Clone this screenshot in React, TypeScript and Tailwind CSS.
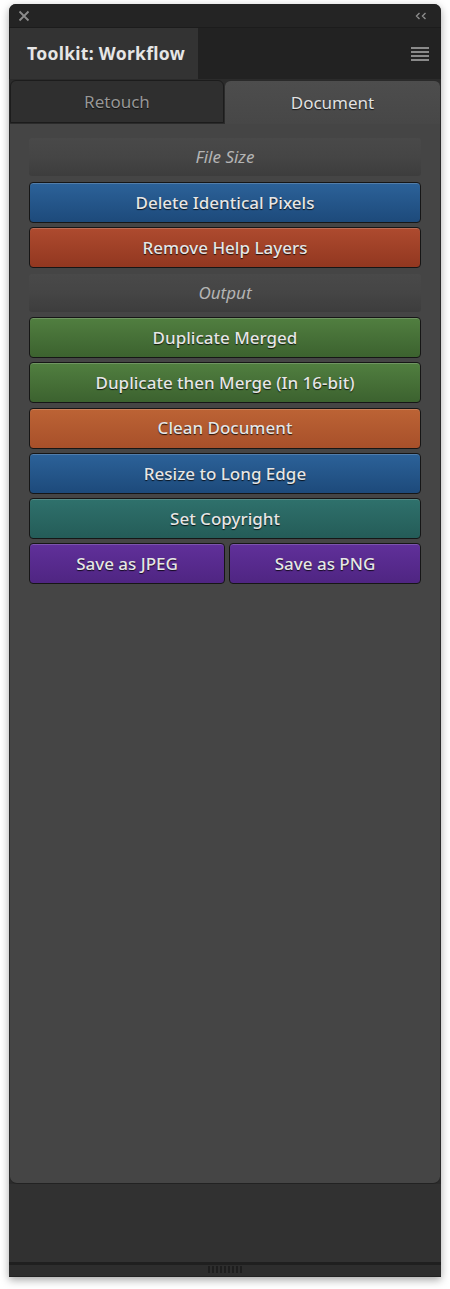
import React from 'react';

const font = { fontFamily: '"Noto Sans", "Open Sans", sans-serif' };

function SectionHead({ label }: { label: string }) {
  return (
    <div className="h-[38px] rounded-[3px] bg-gradient-to-b from-[#494949] via-[#454545] to-[#3d3d3d] flex items-center justify-center">
      <span className="italic text-[17px] text-[#b4b4b4]">{label}</span>
    </div>
  );
}

function Btn({ label, top, bottom, className = '' }: { label: string; top: string; bottom: string; className?: string }) {
  return (
    <button
      className={`h-[41px] rounded-[4px] border border-[#161616] flex items-center justify-center text-[17px] font-medium text-[#e6e6e6] [text-shadow:0_1px_1px_rgba(0,0,0,0.8)] shadow-[inset_0_1px_0_rgba(255,255,255,0.18)] ${top} ${bottom} bg-gradient-to-b ${className}`}
    >
      {label}
    </button>
  );
}

export default function App() {
  return (
    <div className="bg-white min-h-[1289px] pt-[4px] pl-[9px]" style={font}>
      <div className="w-[432px] h-[1273px] rounded-t-[7px] bg-[#2b2b2b] flex flex-col overflow-hidden shadow-[0_3px_8px_rgba(0,0,0,0.35)]">
        {/* title bar */}
        <div className="h-[23px] bg-[#242424] flex items-center justify-between pl-[9px] pr-[14px]">
          <svg width="12" height="12" viewBox="0 0 12 12" className="text-[#8c8c8c]">
            <path d="M1.5 1.5 L10.5 10.5 M10.5 1.5 L1.5 10.5" stroke="currentColor" strokeWidth="1.8" />
          </svg>
          <svg width="12" height="8" viewBox="0 0 12 8" className="text-[#8c8c8c]">
            <path d="M4.5 1 L1.5 4 L4.5 7 M10.5 1 L7.5 4 L10.5 7" stroke="currentColor" strokeWidth="1.4" fill="none" />
          </svg>
        </div>
        {/* header */}
        <div className="h-[52px] bg-[#222222] flex items-stretch justify-between border-t border-[#1c1c1c]">
          <div className="w-[188px] bg-[#333333] flex items-center pl-[17px] ml-[1px]">
            <span className="text-[17.5px] font-bold text-[#e6e6e6] tracking-[0.3px]">Toolkit: Workflow</span>
          </div>
          <div className="flex flex-col justify-center gap-[2px] pr-[12px]">
            <div className="w-[18px] h-[2px] bg-[#8a8a8a]" />
            <div className="w-[18px] h-[2px] bg-[#8a8a8a]" />
            <div className="w-[18px] h-[2px] bg-[#8a8a8a]" />
            <div className="w-[18px] h-[2px] bg-[#8a8a8a]" />
          </div>
        </div>
        {/* tabs */}
        <div className="flex gap-[1px] px-[1px] pt-[1px] bg-[#2b2b2b]">
          <div className="w-[214px] h-[43px] rounded-t-[6px] bg-[#2f2f2f] border border-[#1c1c1c] flex items-center justify-center">
            <span className="text-[17px] text-[#979797] [text-shadow:0_1px_1px_rgba(0,0,0,0.7)]">Retouch</span>
          </div>
          <div className="flex-1 h-[44px] rounded-t-[6px] bg-gradient-to-b from-[#4d4d4d] to-[#474747] border-t border-[#2a2a2a] flex items-center justify-center">
            <span className="text-[17px] text-[#e2e2e2] [text-shadow:0_1px_1px_rgba(0,0,0,0.7)]">Document</span>
          </div>
        </div>
        {/* content */}
        <div className="mx-[1px] h-[1060px] bg-[#454545] rounded-b-[7px] border-b border-[#222] px-[19px] pt-[14px] flex flex-col">
          <SectionHead label="File Size" />
          <div className="mt-[6px] flex flex-col gap-[4.2px]">
            <Btn label="Delete Identical Pixels" top="from-[#2c6299]" bottom="to-[#1d4a7b]" />
            <Btn label="Remove Help Layers" top="from-[#ae4b2f]" bottom="to-[#923720]" />
          </div>
          <div className="mt-[6px]">
            <SectionHead label="Output" />
          </div>
          <div className="mt-[5px] flex flex-col gap-[4.2px]">
            <Btn label="Duplicate Merged" top="from-[#517f40]" bottom="to-[#3c622f]" />
            <Btn label="Duplicate then Merge (In 16-bit)" top="from-[#517f40]" bottom="to-[#3c622f]" />
            <Btn label="Clean Document" top="from-[#bc6335]" bottom="to-[#a8502a]" />
            <Btn label="Resize to Long Edge" top="from-[#2c6299]" bottom="to-[#1d4a7b]" />
            <Btn label="Set Copyright" top="from-[#2f716c]" bottom="to-[#245c58]" />
            <div className="flex gap-[4px]">
              <Btn label="Save as JPEG" top="from-[#60309a]" bottom="to-[#4f2582]" className="w-[196px]" />
              <Btn label="Save as PNG" top="from-[#60309a]" bottom="to-[#4f2582]" className="flex-1" />
            </div>
          </div>
        </div>
        {/* footer */}
        <div className="flex-1 bg-[#313131]" />
        <div className="h-[3px] bg-[#1f1f1f]" />
        <div className="h-[12px] bg-[#2d2d2d] flex justify-center items-start pt-[1px] border-b border-[#222]">
          <div className="flex gap-[2px]">
            {Array.from({ length: 9 }).map((_, i) => (
              <div key={i} className="w-[2px] h-[7px] bg-[#1e1e1e]" />
            ))}
          </div>
        </div>
      </div>
    </div>
  );
}
